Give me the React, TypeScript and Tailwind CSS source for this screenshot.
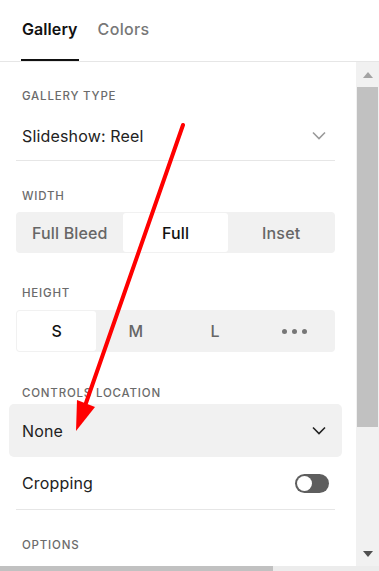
import React from 'react';

const Label = ({ children, className = '' }: { children: React.ReactNode; className?: string }) => (
  <div className={`h-4 px-[6px] text-[11.5px] leading-4 font-medium tracking-[0.07em] uppercase text-[#6b6b6b] ${className}`}>
    {children}
  </div>
);

const Chevron = ({ color }: { color: string }) => (
  <svg width="14" height="9" viewBox="0 0 14 9" fill="none">
    <path d="M1 1.5 L7 7.5 L13 1.5" stroke={color} strokeWidth="1.6" />
  </svg>
);

const Segmented = ({ options, active, height }: { options: React.ReactNode[]; active: number; height: string }) => (
  <div className={`flex ${height} rounded-[4px] bg-[#f1f1f1] p-[1px]`}>
    {options.map((opt, i) => (
      <div
        key={i}
        className={`flex-1 flex items-center justify-center rounded-[3px] text-[16px] tracking-[0.01em] font-medium ${
          i === active ? 'bg-white text-[#111]' : 'text-[#666]'
        }`}
      >
        {opt}
      </div>
    ))}
  </div>
);

const Dots = () => (
  <span className="flex items-center gap-[5px]">
    <span className="w-[5px] h-[5px] rounded-full bg-[#777]" />
    <span className="w-[5px] h-[5px] rounded-full bg-[#777]" />
    <span className="w-[5px] h-[5px] rounded-full bg-[#777]" />
  </span>
);

export default function App() {
  return (
    <div className="relative w-[379px] h-[571px] overflow-hidden bg-white text-[#1a1a1a] font-['Inter','Liberation_Sans',sans-serif] flex flex-col">
      {/* Tabs */}
      <div className="h-[62px] shrink-0 border-b border-[#e6e6e6] flex items-start gap-[20px] px-[22px]">
        <div className="h-[61px] flex flex-col justify-between">
          <span className="pt-[17px] text-[16px] font-semibold text-[#111] tracking-[0.005em]">Gallery</span>
          <span className="h-[2px] bg-[#111] -mx-px" />
        </div>
        <span className="pt-[17px] text-[16px] font-medium text-[#777] tracking-[0.02em]">Colors</span>
      </div>

      <div className="flex flex-1 min-h-0">
        {/* Panel content */}
        <div className="flex-1 pl-4 pr-[21px]">
          <Label className="mt-[26px]">Gallery Type</Label>
          <div className="mt-[7px] h-[50px] px-[6px] flex items-center justify-between border-b border-[#e6e6e6]">
            <span className="text-[16px] text-[#222] tracking-[0.01em]">Slideshow: Reel</span>
            <span className="mr-[3px]"><Chevron color="#9a9a9a" /></span>
          </div>

          <Label className="mt-[27px]">Width</Label>
          <div className="mt-[8px]">
            <Segmented options={['Full Bleed', 'Full', 'Inset']} active={1} height="h-[41px]" />
          </div>

          <Label className="mt-[32px]">Height</Label>
          <div className="mt-[9px]">
            <Segmented options={['S', 'M', 'L', <Dots key="d" />]} active={0} height="h-[42px]" />
          </div>

          <Label className="mt-[33px]">Controls Location</Label>
          <div className="mt-[3px] -mx-[7px] h-[53px] rounded-[5px] bg-[#f1f1f1] pl-[13px] pr-[16px] flex items-center justify-between">
            <span className="text-[16px] text-[#222] tracking-[0.01em]">None</span>
            <Chevron color="#222" />
          </div>

          <div className="h-[53px] px-[6px] flex items-center justify-between border-b border-[#e6e6e6]">
            <span className="text-[16px] text-[#222] tracking-[0.01em]">Cropping</span>
            <span className="w-[34px] h-[19px] rounded-full bg-[#5e5e5e] p-[2px] flex items-center">
              <span className="w-[15px] h-[15px] rounded-full bg-white" />
            </span>
          </div>

          <Label className="mt-[27px]">Options</Label>
        </div>

        {/* Vertical scrollbar */}
        <div className="w-[23px] shrink-0 bg-[#f1f1f1] flex flex-col items-center">
          <div className="h-[25px] flex items-center justify-center">
            <svg width="10" height="6" viewBox="0 0 10 6"><path d="M0 6 L5 0 L10 6 Z" fill="#a3a3a3" /></svg>
          </div>
          <div className="w-[21px] h-[340px] bg-[#c1c1c1]" />
          <div className="flex-1" />
          <div className="h-[25px] flex items-center justify-center">
            <svg width="10" height="6" viewBox="0 0 10 6"><path d="M0 0 L10 0 L5 6 Z" fill="#505050" /></svg>
          </div>
        </div>
      </div>

      {/* Horizontal scrollbar */}
      <div className="h-[5px] shrink-0 flex bg-[#ececec]">
        <div className="w-[273px] bg-[#c1c1c1]" />
      </div>

      {/* Red annotation arrow */}
      <svg className="absolute inset-0 pointer-events-none" width="379" height="571" viewBox="0 0 379 571">
        <line x1="183" y1="125" x2="86" y2="403" stroke="#ff0000" strokeWidth="4" strokeLinecap="round" />
        <path d="M76 431 L95 407 L77 400 Z" fill="#ff0000" />
      </svg>
    </div>
  );
}
